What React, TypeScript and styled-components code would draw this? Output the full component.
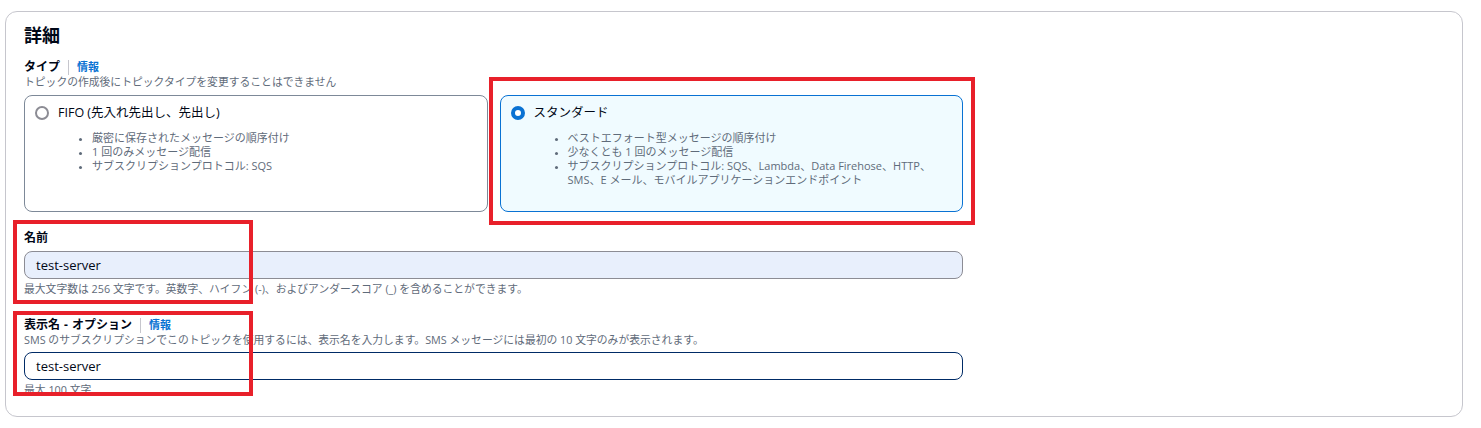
import React from "react";
import styled, { createGlobalStyle } from "styled-components";

const GlobalStyle = createGlobalStyle`
	html, body {
		margin: 0;
		padding: 0;
		background: #ffffff;
	}
	body {
		font-family: "Open Sans", "Noto Sans CJK JP", sans-serif;
		color: #000716;
	}
`;

const Page = styled.div`
	position: relative;
	width: 1481px;
	height: 428px;
	box-sizing: border-box;
	padding: 11px 18px 0 5px;
`;

const Container = styled.section`
	box-sizing: border-box;
	height: 406px;
	border: 1px solid #c6c6cd;
	border-radius: 12px;
	padding: 12px 18px 0 18px;
	overflow: hidden;
`;

const Content = styled.div`
	width: 939px;
	display: flex;
	flex-direction: column;
`;

const Heading = styled.h2`
	margin: 0;
	font-size: 18px;
	line-height: 22px;
	font-weight: 700;
	color: #000716;
`;

const Field = styled.div<{ $top: number }>`
	margin-top: ${(p) => p.$top}px;
	display: flex;
	flex-direction: column;
`;

const LabelRow = styled.div`
	display: flex;
	align-items: center;
	height: 16px;
`;

const Label = styled.span`
	font-size: 12px;
	font-weight: 700;
	line-height: 16px;
	color: #000716;
	word-spacing: 1px;
`;

const Divider = styled.span`
	width: 1px;
	height: 15px;
	background: #c6c6cd;
	margin: 0 8px 0 8px;
`;

const InfoLink = styled.a`
	font-size: 11px;
	font-weight: 700;
	color: #0972d3;
	text-decoration: none;
	line-height: 16px;
`;

const Description = styled.div`
	font-size: 10.8px;
	line-height: 14px;
	color: #5f6b7a;
`;

const Tiles = styled.div`
	margin-top: 6px;
	display: grid;
	grid-template-columns: 1fr 1fr;
	gap: 12px;
`;

const Tile = styled.div<{ $checked?: boolean }>`
	box-sizing: border-box;
	height: 117px;
	border: 1px solid ${(p) => (p.$checked ? "#0972d3" : "#7d8998")};
	background: ${(p) => (p.$checked ? "#f0fbff" : "#ffffff")};
	border-radius: 8px;
	padding: 8px 10px;
`;

const TileHead = styled.div`
	display: flex;
	align-items: center;
	gap: 9px;
	height: 18px;
`;

const Radio = styled.span<{ $checked?: boolean }>`
	box-sizing: border-box;
	width: 14px;
	height: 14px;
	border-radius: 50%;
	background: #ffffff;
	border: ${(p) => (p.$checked ? "4px solid #0972d3" : "2px solid #8c8c94")};
`;

const TileTitle = styled.span`
	font-size: 12.5px;
	line-height: 18px;
	color: #000716;
`;

const Bullets = styled.ul`
	margin: 9px 0 0 0;
	padding: 0 0 0 57px;
	font-size: 11px;
	line-height: 14px;
	color: #5f6b7a;
	li::marker {
		font-size: 9px;
	}
`;

const Input = styled.div<{ $filled?: boolean }>`
	box-sizing: border-box;
	margin-top: 5px;
	height: 28px;
	border-radius: 8px;
	border: 1px solid ${(p) => (p.$filled ? "#8c8c94" : "#002b66")};
	background: ${(p) => (p.$filled ? "#e8effc" : "#ffffff")};
	padding: 0 11px;
	display: flex;
	align-items: center;
	font-size: 13px;
	color: #000716;
`;

const Hint = styled.div`
	margin-top: 3px;
	font-size: 10.8px;
	line-height: 14px;
	color: #5f6b7a;
`;

const Highlight = styled.div`
	position: absolute;
	box-sizing: border-box;
	border: 4px solid #e8202a;
	pointer-events: none;
`;

const highlights = [
	{ left: 489, top: 77, width: 486, height: 148 },
	{ left: 13, top: 220, width: 240, height: 84 },
	{ left: 13, top: 311, width: 240, height: 85 },
];

export default function App() {
	return (
		<>
			<GlobalStyle />
			<Page>
				<Container>
					<Content>
						<Heading>詳細</Heading>
						<Field $top={13}>
							<LabelRow>
								<Label>タイプ</Label>
								<Divider />
								<InfoLink>情報</InfoLink>
							</LabelRow>
							<Description>
								トピックの作成後にトピックタイプを変更することはできません
							</Description>
							<Tiles>
								<Tile>
									<TileHead>
										<Radio />
										<TileTitle>FIFO (先入れ先出し、先出し)</TileTitle>
									</TileHead>
									<Bullets>
										<li>厳密に保存されたメッセージの順序付け</li>
										<li>1 回のみメッセージ配信</li>
										<li>サブスクリプションプロトコル: SQS</li>
									</Bullets>
								</Tile>
								<Tile $checked>
									<TileHead>
										<Radio $checked />
										<TileTitle>スタンダード</TileTitle>
									</TileHead>
									<Bullets>
										<li>ベストエフォート型メッセージの順序付け</li>
										<li>少なくとも 1 回のメッセージ配信</li>
										<li>
											サブスクリプションプロトコル: SQS、Lambda、Data Firehose、HTTP、
											<br />
											SMS、E メール、モバイルアプリケーションエンドポイント
										</li>
									</Bullets>
								</Tile>
							</Tiles>
						</Field>
						<Field $top={18}>
							<LabelRow>
								<Label>名前</Label>
							</LabelRow>
							<Input $filled>test-server</Input>
							<Hint>
								最大文字数は 256 文字です。英数字、ハイフン (-)、およびアンダースコア (_) を含めることができます。
							</Hint>
						</Field>
						<Field $top={21}>
							<LabelRow>
								<Label>表示名 - オプション</Label>
								<Divider />
								<InfoLink>情報</InfoLink>
							</LabelRow>
							<Description>
								SMS のサブスクリプションでこのトピックを使用するには、表示名を入力します。SMS メッセージには最初の 10 文字のみが表示されます。
							</Description>
							<Input>test-server</Input>
							<Hint>最大 100 文字</Hint>
						</Field>
					</Content>
				</Container>
				{highlights.map((h, i) => (
					<Highlight
						key={i}
						style={{ left: h.left, top: h.top, width: h.width, height: h.height }}
					/>
				))}
			</Page>
		</>
	);
}
